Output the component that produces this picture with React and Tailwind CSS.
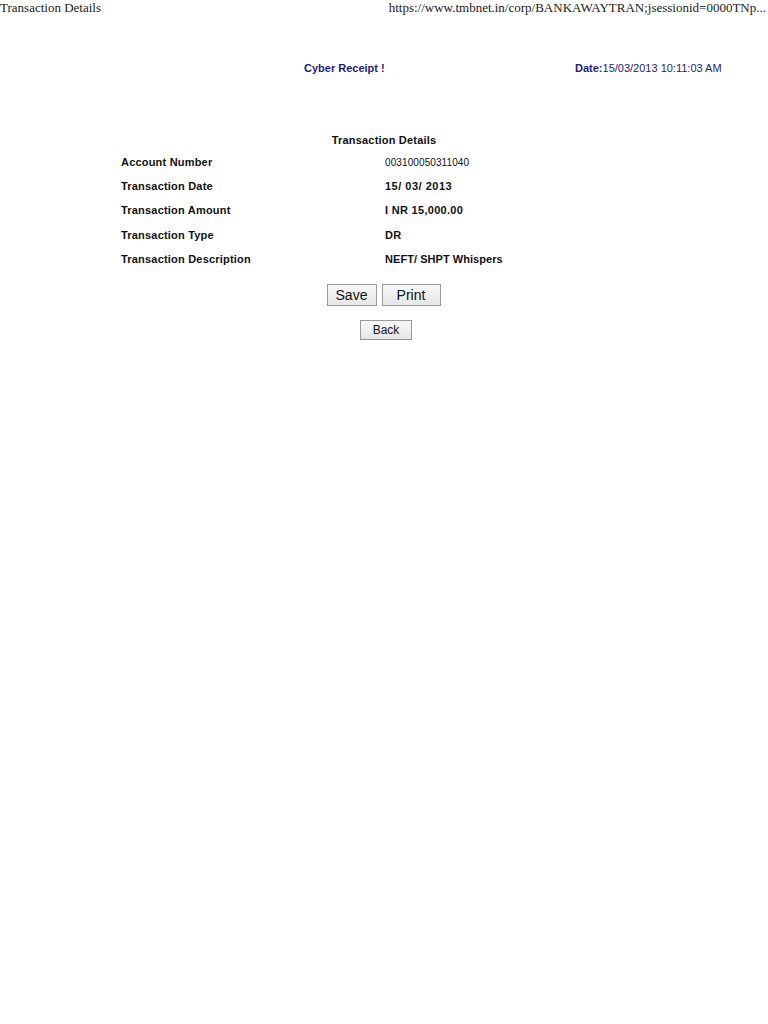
export default function App() {
  const rows = [
    ["Account Number", "003100050311040", "font-normal text-[10px] tracking-[0.1px]"],
    ["Transaction Date", "15/ 03/ 2013", "font-bold tracking-[0.5px]"],
    ["Transaction Amount", "I NR 15,000.00", "font-bold tracking-[0.3px]"],
    ["Transaction Type", "DR", "font-bold"],
    ["Transaction Description", "NEFT/ SHPT Whispers", "font-bold tracking-[0.05px]"],
  ];
  return (
    <div className="w-[768px] h-[1024px] bg-white relative">
      <div className="flex justify-between h-[16px] text-[13px] leading-[15px] text-[#222] font-['Liberation_Serif',serif] pr-[2px]">
        <span>Transaction Details</span>
        <span>https://www.tmbnet.in/corp/BANKAWAYTRAN;jsessionid=0000TNp...</span>
      </div>
      <div className="font-['Liberation_Sans',Arial,sans-serif] text-[11px] tracking-[0.2px]">
        <div className="flex mt-[45px] pl-[304px] leading-[14px] text-[#1c1c7a] tracking-normal">
          <span className="w-[271px] font-bold">Cyber Receipt !</span>
          <span><b>Date:</b>15/03/2013 10:11:03 AM</span>
        </div>
        <div className="mt-[58px] text-center font-bold leading-[14px] text-[#111]">
          Transaction Details
        </div>
        <div className="mt-[3px] pl-[121px] text-[#111]">
          {rows.map(([l, v, c]) => (
            <div key={l} className="flex h-[24.25px] items-center">
              <span className="w-[264px] font-bold">{l}</span>
              <span className={c}>{v}</span>
            </div>
          ))}
        </div>
        <div className="flex justify-center gap-[5px] mt-[13px] pr-[1px]">
          <button className="w-[50px] h-[22px] border border-[#9a9a9a] bg-gradient-to-b from-[#f8f8f8] to-[#e6e6e6] text-[14px] tracking-normal text-[#111] leading-none">Save</button>
          <button className="w-[59px] h-[22px] border border-[#9a9a9a] bg-gradient-to-b from-[#f8f8f8] to-[#e6e6e6] text-[14px] tracking-normal text-[#111] leading-none">Print</button>
        </div>
        <div className="flex justify-center mt-[14px] pl-[4px]">
          <button className="w-[52px] h-[20px] border border-[#9a9a9a] bg-gradient-to-b from-[#f8f8f8] to-[#e6e6e6] text-[12px] tracking-normal text-[#111] leading-none">Back</button>
        </div>
      </div>
    </div>
  );
}
